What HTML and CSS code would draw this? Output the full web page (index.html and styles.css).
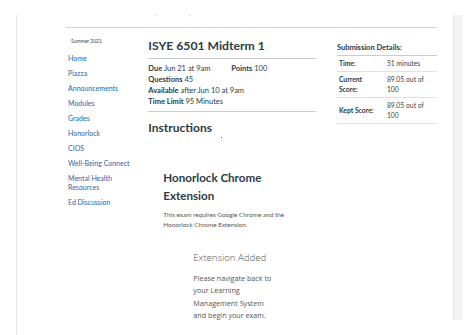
FILE: index.html
```html
<!DOCTYPE html>
<html lang="en">
<head>
    <meta charset="UTF-8">
    <meta name="viewport" content="width=device-width, initial-scale=1.0">
    <title>ISYE 6501 Midterm 1</title>
    <link rel="stylesheet" href="styles.css">
</head>
<body>

<div class="frame">
    <div class="content">
        <div class="specks"><span></span><span></span></div>
        <div class="wrap">
            <div class="nav">
                <div class="term">Summer 2021</div>
                <a href="#">Home</a>
                <a href="#">Piazza</a>
                <a href="#">Announcements</a>
                <a href="#">Modules</a>
                <a href="#">Grades</a>
                <a href="#">Honorlock</a>
                <a href="#">CIOS</a>
                <a href="#">Well-Being Connect</a>
                <a href="#">Mental Health Resources</a>
                <a href="#">Ed Discussion</a>
            </div>

            <div class="main">
                <h1 class="title">ISYE 6501 Midterm 1</h1>
                <div class="details">
                    <div class="row">
                        <div class="due"><b>Due</b> Jun 21 at 9am</div>
                        <div><b>Points</b> 100</div>
                    </div>
                    <div><b>Questions</b> 45</div>
                    <div><b>Available</b> after Jun 10 at 9am</div>
                    <div><b>Time Limit</b> 95 Minutes</div>
                </div>
                <h2 class="instr">Instructions</h2>
                <div class="dot"></div>

                <div class="honor">
                    <h3>Honorlock Chrome Extension</h3>
                    <p>This exam requires Google Chrome and the Honorlock Chrome Extension.</p>
                    <div class="added">
                        <div class="added-title">Extension Added</div>
                        <p>Please navigate back to your Learning Management System and begin your exam.</p>
                    </div>
                </div>
            </div>

            <div class="aside">
                <div class="sub-title">Submission Details:</div>
                <table class="sub">
                    <tr><th>Time:</th><td>51 minutes</td></tr>
                    <tr><th>Current Score:</th><td>89.05 out of 100</td></tr>
                    <tr><th>Kept Score:</th><td>89.05 out of 100</td></tr>
                </table>
            </div>
        </div>
    </div>
    <div class="scroll"></div>
</div>

</body>
</html>
```

FILE: styles.css
```css
body {
    margin: 0;
    background: #fff;
    font-family: Lato, "Liberation Sans", sans-serif;
    color: #2d3b45;
}

.frame {
    display: flex;
    margin: 15px 0 0 16px;
    width: 446px;
    height: 320px;
    border-left: 1px solid #e4e4e4;
}

.content {
    flex: 1;
    padding-left: 49px;
}

.specks {
    display: flex;
    height: 12px;
    padding-left: 90px;
    gap: 32px;
}
.specks span {
    width: 1px;
    height: 1px;
    background: #c8c8c8;
}

.wrap {
    display: flex;
    width: 371px;
    border-top: 1px solid #d6d6d6;
}

.nav {
    width: 81px;
    padding: 10px 0 0 2px;
    display: flex;
    flex-direction: column;
}
.term {
    font-size: 5px;
    color: #444;
    padding-left: 3px;
    margin-bottom: 10px;
}
.nav a {
    font-size: 7px;
    line-height: 9px;
    color: #2b64ad;
    text-decoration: none;
    margin-bottom: 6px;
    width: 70px;
}

.main {
    width: 169px;
    padding-top: 9px;
}
.title {
    margin: 0;
    font-size: 12.2px;
    font-weight: 700;
    line-height: 17px;
    padding-bottom: 4px;
    border-bottom: 1px solid #c7cdd1;
}
.details {
    font-size: 7.5px;
    line-height: 11px;
    padding: 4px 0 4px;
    border-bottom: 1px solid #c7cdd1;
}
.details b {
    font-weight: 700;
}
.row {
    display: flex;
}
.due {
    width: 83px;
}
.instr {
    margin: 8px 0 0;
    font-size: 12px;
    font-weight: 700;
    line-height: 16px;
}
.dot {
    width: 1px;
    height: 1px;
    background: #666;
    margin: 1px 0 0 73px;
}

.honor {
    padding: 31px 0 0 15px;
}
.honor h3 {
    margin: 0;
    font-size: 11.6px;
    font-weight: 700;
    line-height: 18px;
    width: 120px;
}
.honor p {
    margin: 5px 0 0;
    font-size: 6.4px;
    font-weight: 400;
    line-height: 10px;
    width: 140px;
    color: #555;
}
.added {
    padding: 21px 0 0 30px;
    font-family: "Open Sans", "Liberation Sans", sans-serif;
    color: #555;
}
.added-title {
    font-size: 9.6px;
    font-weight: 300;
    line-height: 14px;
}
.added p {
    margin: 7px 0 0;
    font-size: 7.2px;
    line-height: 12.4px;
    width: 82px;
    color: #555;
}

.aside {
    width: 101px;
    margin-left: 21px;
    padding-top: 15px;
}
.sub-title {
    font-size: 7.5px;
    font-weight: 700;
    padding-bottom: 3px;
    border-bottom: 1px solid #c7cdd1;
}
.sub {
    width: 100%;
    border-collapse: collapse;
    font-size: 6.8px;
    line-height: 10.5px;
}
.sub th, .sub td {
    text-align: left;
    vertical-align: middle;
    padding: 2px 2px;
    border-bottom: 1px solid #dfe3e6;
}
.sub th {
    font-weight: 700;
    width: 40px;
    padding-right: 6px;
}
.sub td {
    padding-left: 2px;
    color: #444;
}

.scroll {
    width: 9px;
    height: 305px;
    margin-left: 5px;
    background: #f3f3f3;
    border-left: 1px solid #e6e6e6;
}
```
